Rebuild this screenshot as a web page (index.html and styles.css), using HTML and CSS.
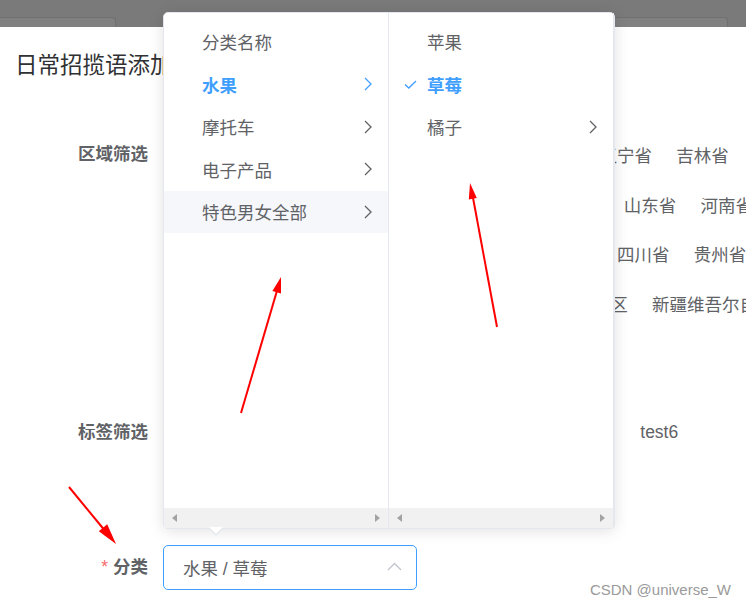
FILE: index.html
```html
<!DOCTYPE html>
<html lang="zh-CN">
<head>
    <meta charset="UTF-8">
    <title>日常招揽语添加</title>
    <link rel="stylesheet" href="styles.css">
</head>
<body>
    <div class="top-band">
        <div class="tab tab-left"></div>
        <div class="tab tab-right"></div>
    </div>

    <div class="dialog">
        <div class="dialog-header">
            <span class="dialog-title">日常招揽语添加</span>
        </div>

        <form class="form">
            <div class="form-item item-region">
                <label class="form-label">区域筛选</label>
                <div class="form-content region-list">
                    <div class="region-row">
                        <span>北京市</span><span>天津市</span><span>河北省</span><span>山西省</span><span>内蒙古自治区</span><span>辽宁省</span><span>吉林省</span><span>黑龙江省</span>
                    </div>
                    <div class="region-row">
                        <span>上海市</span><span>江苏省</span><span>浙江省</span><span>安徽省</span><span>福建省</span><span>江西省</span><span>山东省</span><span>河南省</span>
                    </div>
                    <div class="region-row">
                        <span>湖北省</span><span>湖南省</span><span>广东省</span><span>广西壮族自治区</span><span>海南省</span><span>四川省</span><span>贵州省</span><span>云南省</span>
                    </div>
                    <div class="region-row">
                        <span>重庆市</span><span>西藏自治区</span><span>陕西省</span><span>甘肃省</span><span>宁夏回族自治区</span><span>新疆维吾尔自治区</span>
                    </div>
                </div>
            </div>

            <div class="form-item item-tags">
                <label class="form-label">标签筛选</label>
                <div class="form-content tag-list">
                    <span>test1</span><span>test2</span><span>test3</span><span>test4</span><span>test5</span><span>test6</span>
                </div>
            </div>

            <div class="form-item item-category">
                <label class="form-label"><span class="required">*</span>分类</label>
                <div class="form-content">
                    <div class="cascader-input">
                        <span class="cascader-value">水果 / 草莓</span>
                        <svg class="icon-up" width="15" height="9" viewBox="0 0 15 9">
                            <polyline points="1,8 7.5,1.5 14,8" fill="none" stroke="#c0c4cc" stroke-width="1.3"/>
                        </svg>
                    </div>
                </div>
            </div>
        </form>

        <div class="watermark">CSDN @universe_W</div>
    </div>

    <!-- cascader dropdown -->
    <div class="cascader-panel">
        <div class="menu">
            <ul class="menu-list">
                <li class="node"><span class="node-check"></span><span class="node-label">分类名称</span></li>
                <li class="node is-active">
                    <span class="node-check"></span><span class="node-label">水果</span>
                    <svg class="node-arrow" width="8" height="14" viewBox="0 0 8 14"><polyline points="1,1 7,7 1,13" fill="none" stroke="currentColor" stroke-width="1.3"/></svg>
                </li>
                <li class="node">
                    <span class="node-check"></span><span class="node-label">摩托车</span>
                    <svg class="node-arrow" width="8" height="14" viewBox="0 0 8 14"><polyline points="1,1 7,7 1,13" fill="none" stroke="currentColor" stroke-width="1.3"/></svg>
                </li>
                <li class="node">
                    <span class="node-check"></span><span class="node-label">电子产品</span>
                    <svg class="node-arrow" width="8" height="14" viewBox="0 0 8 14"><polyline points="1,1 7,7 1,13" fill="none" stroke="currentColor" stroke-width="1.3"/></svg>
                </li>
                <li class="node is-hover">
                    <span class="node-check"></span><span class="node-label">特色男女全部</span>
                    <svg class="node-arrow" width="8" height="14" viewBox="0 0 8 14"><polyline points="1,1 7,7 1,13" fill="none" stroke="currentColor" stroke-width="1.3"/></svg>
                </li>
            </ul>
            <div class="scrollbar"><i class="tri-left"></i><i class="tri-right"></i></div>
        </div>
        <div class="menu">
            <ul class="menu-list">
                <li class="node"><span class="node-check"></span><span class="node-label">苹果</span></li>
                <li class="node is-active">
                    <span class="node-check">
                        <svg width="13" height="9" viewBox="0 0 13 9"><polyline points="1,4.5 4.8,8 12,1" fill="none" stroke="#409eff" stroke-width="1.3"/></svg>
                    </span>
                    <span class="node-label">草莓</span>
                </li>
                <li class="node">
                    <span class="node-check"></span><span class="node-label">橘子</span>
                    <svg class="node-arrow" width="8" height="14" viewBox="0 0 8 14"><polyline points="1,1 7,7 1,13" fill="none" stroke="currentColor" stroke-width="1.3"/></svg>
                </li>
            </ul>
            <div class="scrollbar"><i class="tri-left"></i><i class="tri-right"></i></div>
        </div>
        <div class="popper-arrow"></div>
    </div>

    <!-- red annotation arrows -->
    <svg class="annotations" width="746" height="605" viewBox="0 0 746 605">
        <line x1="241" y1="413" x2="277.5" y2="289" stroke="#ff0000" stroke-width="2"/>
        <polygon points="281,277 281,293.6 272.4,291" fill="#ff0000"/>
        <line x1="497" y1="327" x2="472.5" y2="195" stroke="#ff0000" stroke-width="2"/>
        <polygon points="470,183 476.8,198 468.8,199.5" fill="#ff0000"/>
        <line x1="69" y1="487" x2="106" y2="532" stroke="#ff0000" stroke-width="2"/>
        <polygon points="116,544 98.8,531.2 107.2,524.2" fill="#ff0000"/>
    </svg>
</body>
</html>
```

FILE: styles.css
```css
* {
    box-sizing: border-box;
}

body {
    margin: 0;
    width: 746px;
    height: 605px;
    overflow: hidden;
    position: relative;
    background-color: #7a7a7a;
    font-family: 'Liberation Sans', 'Noto Sans CJK SC', sans-serif;
}

.top-band {
    height: 27px;
    display: flex;
    align-items: flex-end;
    justify-content: space-between;
}

.tab {
    height: 10px;
    background-color: #808080;
    border-top: 1px solid #707070;
    border-right: 1px solid #707070;
    border-top-right-radius: 4px;
}

.tab-left {
    width: 116px;
}

.tab-right {
    width: 230px;
    margin-right: 18px;
}

.dialog {
    height: 578px;
    background-color: #fff;
    position: relative;
}

.dialog-header {
    padding: 24px 15px 0;
}

.dialog-title {
    display: block;
    font-size: 22.5px;
    line-height: 30px;
    color: #303133;
}

.form {
    margin: 0;
    padding-top: 51px;
}

.form-item {
    display: flex;
}

.form-label {
    width: 148px;
    flex-shrink: 0;
    text-align: right;
    font-size: 17.5px;
    font-weight: bold;
    color: #606266;
    line-height: 45px;
}

.form-content {
    margin-left: 15px;
    flex: 1;
    min-width: 0;
}

.item-region .form-label {
    line-height: 45.5px;
}

.region-row {
    display: flex;
    gap: 24.3px;
    white-space: nowrap;
    font-size: 17.5px;
    line-height: 49.5px;
    color: #606266;
}

.item-tags {
    margin-top: 80px;
}

.tag-list {
    display: flex;
    gap: 57.5px;
    white-space: nowrap;
    font-size: 17.5px;
    line-height: 45px;
    color: #606266;
}

.item-category {
    margin-top: 90px;
}

.required {
    color: #f56c6c;
    font-weight: normal;
    margin-right: 5px;
}

.cascader-input {
    width: 254px;
    height: 45px;
    border: 1px solid #409eff;
    border-radius: 5px;
    display: flex;
    align-items: center;
    justify-content: space-between;
    padding: 0 14px 0 19px;
}

.cascader-value {
    font-size: 17.5px;
    color: #606266;
}

.icon-up {
    margin-top: -2px;
}

.watermark {
    position: absolute;
    right: 15px;
    bottom: 7px;
    font-size: 15px;
    color: #9a9a9a;
}

/* cascader dropdown */
.cascader-panel {
    position: absolute;
    top: 12px;
    left: 163px;
    width: 452px;
    height: 517px;
    background-color: #fff;
    border: 1px solid #e4e7ed;
    border-radius: 5px;
    box-shadow: 0 2px 15px rgba(0, 0, 0, 0.12);
    display: flex;
    z-index: 10;
}

.menu {
    width: 225px;
    border-right: 1px solid #e4e7ed;
    display: flex;
    flex-direction: column;
}

.menu:last-of-type {
    flex: 1;
    border-right: none;
}

.menu-list {
    flex: 1;
    margin: 0;
    padding: 7.5px 0;
    list-style: none;
}

.node {
    height: 42.5px;
    display: flex;
    align-items: center;
    padding: 0 16px 0 15px;
    font-size: 17.5px;
    color: #606266;
}

.node-check {
    width: 23px;
    display: flex;
    align-items: center;
}

.node-label {
    flex: 1;
}

.node.is-active {
    color: #409eff;
    font-weight: bold;
}

.node.is-hover {
    background-color: #f5f7fa;
}

.scrollbar {
    height: 20px;
    background-color: #f1f1f1;
    display: flex;
    align-items: center;
    justify-content: space-between;
    padding: 0 8px;
}

.menu:last-of-type .scrollbar {
    border-bottom-right-radius: 4px;
}

.tri-left {
    width: 0;
    height: 0;
    border-top: 4.5px solid transparent;
    border-bottom: 4.5px solid transparent;
    border-right: 5px solid #a3a3a3;
}

.tri-right {
    width: 0;
    height: 0;
    border-top: 4.5px solid transparent;
    border-bottom: 4.5px solid transparent;
    border-left: 5px solid #a3a3a3;
}

.popper-arrow {
    position: absolute;
    bottom: -8px;
    left: 44px;
    width: 0;
    height: 0;
    border-left: 8px solid transparent;
    border-right: 8px solid transparent;
    border-top: 8px solid #e4e7ed;
}

.popper-arrow::after {
    content: "";
    position: absolute;
    left: -7px;
    top: -9px;
    border-left: 7px solid transparent;
    border-right: 7px solid transparent;
    border-top: 7px solid #fff;
}

.annotations {
    position: absolute;
    top: 0;
    left: 0;
    z-index: 20;
    pointer-events: none;
}
```
